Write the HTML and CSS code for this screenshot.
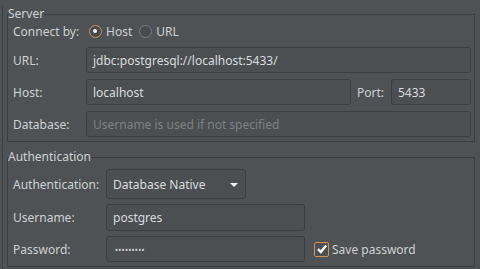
FILE: index.html
```html
<!DOCTYPE html>
<html>
<head>
<meta charset="utf-8">
<link rel="stylesheet" href="styles.css">
</head>
<body>
<div class="panel">
  <fieldset class="group server">
    <legend>Server</legend>
    <div class="grid server-grid">
      <span class="label">Connect by:</span>
      <div class="radios">
        <label class="radio"><span class="dot on"></span>Host</label>
        <label class="radio"><span class="dot"></span>URL</label>
      </div>
      <span class="label">URL:</span>
      <div class="field">jdbc:postgresql://localhost:5433/</div>
      <span class="label">Host:</span>
      <div class="host-row">
        <div class="field">localhost</div>
        <span class="label port-label">Port:</span>
        <div class="field port">5433</div>
      </div>
      <span class="label">Database:</span>
      <div class="field placeholder">Username is used if not specified</div>
    </div>
  </fieldset>
  <fieldset class="group auth">
    <legend>Authentication</legend>
    <div class="grid auth-grid">
      <span class="label">Authentication:</span>
      <div class="select">Database Native<span class="arrow"></span></div>
      <span class="label">Username:</span>
      <div class="field user">postgres</div>
      <span class="label">Password:</span>
      <div class="pw-row">
        <div class="field user pw">•••••••••</div>
        <label class="check"><span class="box"><svg width="12" height="12" viewBox="0 0 12 12"><path d="M2 6.2 L4.8 9 L10.2 2.6" fill="none" stroke="#ffffff" stroke-width="2.4"/></svg></span>Save password</label>
      </div>
    </div>
  </fieldset>
</div>
</body>
</html>
```
FILE: styles.css
```css
html, body {
  margin: 0;
  padding: 0;
  background: #4e5254;
  width: 480px;
  height: 269px;
  overflow: hidden;
}
body {
  font-family: "Noto Sans", "Open Sans", sans-serif;
  font-size: 12px;
  color: #cdd1d3;
}
.panel {
  margin-left: 2px;
  width: 475px;
  height: 269px;
  border-left: 1px solid #3e4143;
  box-sizing: border-box;
  padding: 0 0 0 4px;
}
.group {
  margin: 0;
  padding: 0;
  border: 1px solid #3b3e40;
  width: 468px;
  box-sizing: border-box;
  min-inline-size: 0;
}
.group legend {
  padding: 0;
  margin-left: 0;
  line-height: 16px;
  color: #cdd1d3;
}
.server {
  margin-top: 6px;
}
.auth {
  margin-top: 7px;
}
.grid {
  display: grid;
  align-items: center;
  padding: 0 3px 4px 5px;
}
.server-grid {
  grid-template-columns: 73px 1fr;
  grid-template-rows: 19px 26px 26px 26px;
  row-gap: 6px;
  padding-top: 0;
}
.auth-grid {
  grid-template-columns: 93px 1fr;
  grid-template-rows: 30px 27px 26px;
  row-gap: 5px;
  padding-top: 4px;
}
.label {
  white-space: nowrap;
}
.radios {
  display: flex;
  align-items: center;
  gap: 7px;
  margin-left: 3px;
}
.radio {
  display: flex;
  align-items: center;
  gap: 4px;
}
.dot {
  width: 13px;
  height: 13px;
  box-sizing: border-box;
  border-radius: 50%;
  border: 1px solid #7a7e80;
  background: #474b4d;
  position: relative;
}
.dot.on {
  border: 1.5px solid #d09457;
  background: #474b4d;
}
.dot.on::after {
  content: "";
  position: absolute;
  left: 3px;
  top: 3px;
  width: 4px;
  height: 4px;
  border-radius: 50%;
  background: #f2f2f2;
}
.field {
  height: 26px;
  box-sizing: border-box;
  border: 1px solid #3b3e40;
  border-radius: 3px;
  background: #4b4f51;
  padding: 0 6px;
  display: flex;
  align-items: center;
  color: #d9dcde;
  white-space: nowrap;
}
.placeholder {
  color: #7d8183;
}
.host-row {
  display: grid;
  grid-template-columns: 1fr 40px 80px;
  column-gap: 0;
  align-items: center;
}
.port-label {
  padding-left: 6px;
}
.select {
  width: 140px;
  height: 30px;
  box-sizing: border-box;
  border: 1px solid #3b3e40;
  border-radius: 3px;
  background: #4b4f51;
  display: flex;
  align-items: center;
  padding: 0 7px 0 6px;
  justify-content: space-between;
  color: #d9dcde;
}
.arrow {
  width: 0;
  height: 0;
  border-left: 4px solid transparent;
  border-right: 4px solid transparent;
  border-top: 4px solid #f0f0f0;
  margin-top: 1px;
}
.user {
  width: 199px;
}
.auth-grid .user:not(.pw) {
  height: 27px;
}
.pw {
  font-size: 8px;
  letter-spacing: 0.3px;
  padding-left: 8px;
}
.pw-row {
  display: flex;
  align-items: center;
  gap: 9px;
}
.check {
  display: flex;
  align-items: center;
  gap: 3px;
}
.box {
  width: 15px;
  height: 15px;
  box-sizing: border-box;
  border: 1px solid #d09457;
  border-radius: 2px;
  background: #4b4f51;
  display: flex;
  align-items: center;
  justify-content: center;
}
```
